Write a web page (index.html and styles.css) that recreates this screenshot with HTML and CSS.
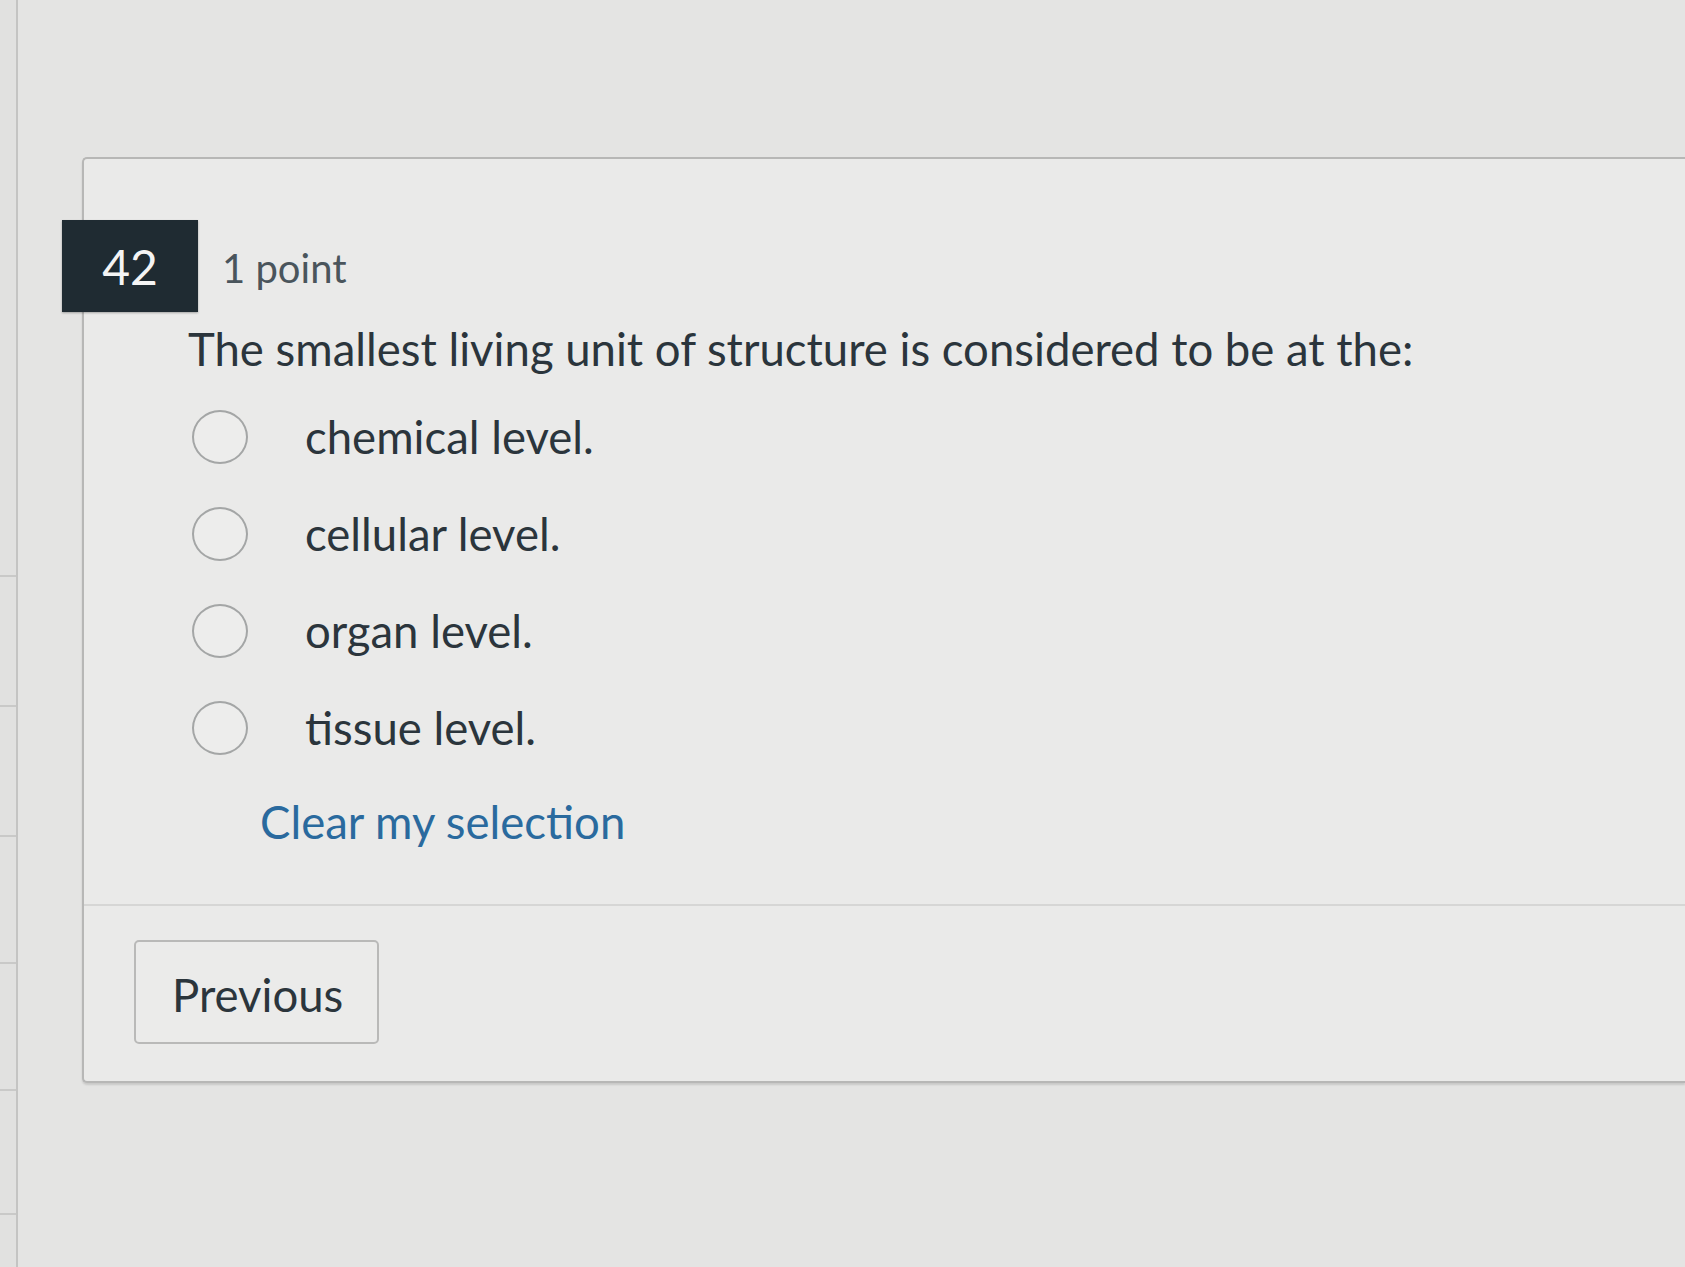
FILE: index.html
```html
<!DOCTYPE html>
<html lang="en">
<head>
<meta charset="utf-8">
<title>Quiz question 42</title>
<link rel="stylesheet" href="styles.css">
</head>
<body>
<div class="page">
  <div class="side-strip">
    <div class="tick t1"></div>
    <div class="tick t2"></div>
    <div class="tick t3"></div>
    <div class="tick t4"></div>
    <div class="tick t5"></div>
    <div class="tick t6"></div>
  </div>
  <main class="content">
    <section class="card">
      <div class="card-body">
        <header class="q-header">
          <div class="q-number">42</div>
          <div class="q-points">1 point</div>
        </header>
        <p class="q-text">The smallest living unit of structure is considered to be at the:</p>
        <ul class="options">
          <li class="option"><span class="radio"></span><span class="label">chemical level.</span></li>
          <li class="option"><span class="radio"></span><span class="label">cellular level.</span></li>
          <li class="option"><span class="radio"></span><span class="label">organ level.</span></li>
          <li class="option"><span class="radio"></span><span class="label">tissue level.</span></li>
        </ul>
        <a class="clear-link" href="#">Clear my selection</a>
      </div>
      <footer class="card-footer">
        <button class="btn" type="button">Previous</button>
      </footer>
    </section>
  </main>
</div>
</body>
</html>
```

FILE: styles.css
```css
html, body {
  margin: 0;
  padding: 0;
}

body {
  background: #e4e4e3;
  font-family: Lato, "Open Sans", "Liberation Sans", sans-serif;
  color: #2b353c;
  overflow: hidden;
}

.page {
  display: flex;
  min-height: 1267px;
}

.side-strip {
  width: 16px;
  flex: none;
  border-right: 2px solid #c4c4c3;
  background: #e1e1e0;
  display: flex;
  flex-direction: column;
}

.tick {
  border-top: 2px solid #c9c9c8;
}
.t1 { margin-top: 575px; }
.t2 { margin-top: 128px; }
.t3 { margin-top: 128px; }
.t4 { margin-top: 125px; }
.t5 { margin-top: 125px; }
.t6 { margin-top: 122px; }

.content {
  flex: 1;
  padding-top: 157px;
  padding-left: 64px;
}

.card {
  background: #eaeae9;
  border: 2px solid #b7b7b6;
  border-right: none;
  border-radius: 5px 0 0 5px;
  box-shadow: 0 2px 2px rgba(0, 0, 0, 0.12);
  height: 922px;
  display: flex;
  flex-direction: column;
}

.card-body {
  padding: 61px 0 0 0;
  height: 684px;
}

.q-header {
  display: flex;
  align-items: center;
  margin-left: -22px;
}

.q-number {
  width: 136px;
  height: 92px;
  background: #1f2b32;
  color: #f4f4f4;
  font-size: 48px;
  display: flex;
  align-items: center;
  justify-content: center;
  box-shadow: 0 1px 2px rgba(0,0,0,0.3);
}

.q-points {
  margin-left: 24px;
  font-size: 40px;
  color: #4a555c;
  padding-top: 4px;
}

.q-text {
  margin: 9px 0 0 104px;
  font-size: 45.5px;
  line-height: 56px;
  color: #2b353c;
}

.options {
  list-style: none;
  margin: 11px 0 0 0;
  padding: 0 0 0 108px;
}

.option {
  display: flex;
  align-items: center;
  height: 97px;
}

.radio {
  width: 56px;
  height: 54px;
  box-sizing: border-box;
  border: 2px solid #a4a6a6;
  border-radius: 50%;
  background: #ededec;
  flex: none;
}

.label {
  margin-left: 57px;
  font-size: 45.5px;
  color: #2b353c;
}

.clear-link {
  display: inline-block;
  margin: 18px 0 0 176px;
  font-size: 45.5px;
  color: #2a6a9e;
  text-decoration: none;
}

.card-footer {
  border-top: 2px solid #d6d6d5;
  padding: 34px 0 0 50px;
}

.btn {
  width: 245px;
  height: 104px;
  font-family: inherit;
  font-size: 45.5px;
  color: #2b353c;
  background: #ebebea;
  border: 2px solid #b9b9b8;
  border-radius: 5px;
  text-align: left;
  padding: 4px 0 0 36px;
}
```
